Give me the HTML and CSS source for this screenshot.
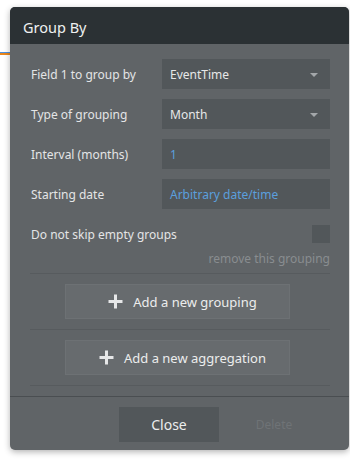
FILE: index.html
```html
<!DOCTYPE html>
<html>
<head>
<meta charset="utf-8">
<link rel="stylesheet" href="styles.css">
</head>
<body>
<div class="edge-line"></div>
<div class="panel">
  <div class="header">Group By</div>
  <div class="content">
    <div class="row">
      <div class="label">Field 1 to group by</div>
      <div class="field select"><span>EventTime</span><span class="caret"></span></div>
    </div>
    <div class="row">
      <div class="label">Type of grouping</div>
      <div class="field select"><span>Month</span><span class="caret"></span></div>
    </div>
    <div class="row">
      <div class="label">Interval (months)</div>
      <div class="field blue">1</div>
    </div>
    <div class="row">
      <div class="label">Starting date</div>
      <div class="field blue">Arbitrary date/time</div>
    </div>
    <div class="row check-row">
      <div class="label">Do not skip empty groups</div>
      <div class="checkbox"></div>
    </div>
    <div class="remove">remove this grouping</div>
    <div class="divider"></div>
    <div class="btn-wrap">
      <div class="add-btn">
        <svg width="15" height="15" viewBox="0 0 15 15"><path d="M7.5 0.5v14M0.5 7.5h14" stroke="#e6e7e8" stroke-width="3"/></svg>
        <span>Add a new grouping</span>
      </div>
    </div>
    <div class="divider"></div>
    <div class="btn-wrap">
      <div class="add-btn">
        <svg width="15" height="15" viewBox="0 0 15 15"><path d="M7.5 0.5v14M0.5 7.5h14" stroke="#e6e7e8" stroke-width="3"/></svg>
        <span>Add a new aggregation</span>
      </div>
    </div>
    <div class="divider"></div>
  </div>
  <div class="footer">
    <div class="close">Close</div>
    <div class="delete">Delete</div>
  </div>
</div>
</body>
</html>
```
FILE: styles.css
```css
html, body {
  margin: 0;
  padding: 0;
  background: #ffffff;
}
body {
  font-family: "Noto Sans", "Open Sans", sans-serif;
  position: relative;
  width: 350px;
  height: 464px;
  overflow: hidden;
}
.edge-line {
  position: absolute;
  left: 0;
  top: 52px;
  width: 10px;
  height: 1px;
  background: #4a90e2;
  border-bottom: 2px solid #e8871e;
}
.panel {
  position: relative;
  margin: 7px 0 0 10px;
  width: 339px;
  height: 443px;
  border-radius: 5px;
  overflow: hidden;
  background: #606467;
  box-shadow: 0 2px 6px rgba(0, 0, 0, 0.3);
  display: flex;
  flex-direction: column;
}
.header {
  height: 37px;
  flex: none;
  background: #2b3134;
  color: #eef0f0;
  font-size: 14.5px;
  line-height: 40px;
  padding-left: 13px;
}
.content {
  padding: 15px 19px 0 20px;
  flex: none;
}
.row {
  display: flex;
  align-items: center;
  height: 30px;
  margin-bottom: 10px;
}
.label {
  width: 131px;
  flex: none;
  color: #e4e5e6;
  font-size: 12px;
  padding-left: 1px;
}
.field {
  flex: 1;
  height: 30px;
  background: #52575a;
  display: flex;
  align-items: center;
  justify-content: space-between;
  padding: 0 12px 0 8px;
  font-size: 12px;
  color: #e6e7e8;
  box-sizing: border-box;
}
.field.blue {
  color: #5b9fdd;
}
.caret {
  width: 0;
  height: 0;
  border-left: 4px solid transparent;
  border-right: 4px solid transparent;
  border-top: 4px solid #a3a7aa;
  margin-top: 2px;
}
.check-row {
  margin-top: 1px;
  margin-bottom: 2px;
  justify-content: space-between;
}
.check-row .label {
  width: auto;
}
.checkbox {
  width: 18px;
  height: 18px;
  background: #52575a;
}
.remove {
  text-align: right;
  font-size: 12px;
  line-height: 16px;
  color: #898d90;
  margin-bottom: 6px;
}
.divider {
  height: 1px;
  background: #575b5e;
}
.btn-wrap {
  padding: 10px 0;
}
.add-btn {
  margin-left: 35px;
  width: 225px;
  height: 35px;
  box-sizing: border-box;
  border: 1px solid #6d7174;
  background: #676b6e;
  display: flex;
  align-items: center;
  justify-content: center;
  gap: 10px;
  padding-left: 10px;
  color: #eceded;
  font-size: 13px;
}
.add-btn svg {
  flex: none;
}
.footer {
  margin-top: 10px;
  border-top: 1px solid #4a4e51;
  flex: 1;
  display: flex;
  gap: 5px;
  padding: 10px 0 0 109px;
  align-items: flex-start;
}
.close {
  width: 100px;
  height: 35px;
  background: #52575a;
  color: #eceded;
  font-size: 14px;
  line-height: 35px;
  text-align: center;
}
.delete {
  width: 100px;
  height: 35px;
  color: #6f7376;
  font-size: 12px;
  line-height: 35px;
  text-align: center;
}
```
